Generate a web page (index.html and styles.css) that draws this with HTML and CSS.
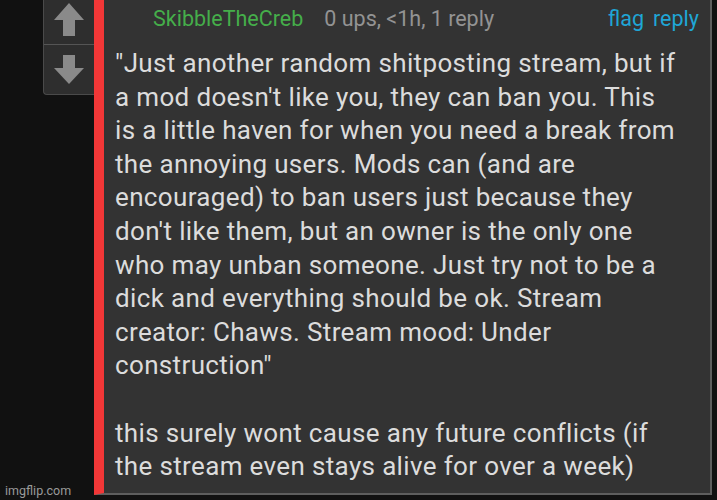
FILE: index.html
```html
<!doctype html>
<html>
<head>
	<meta charset='utf-8' />
	<title>comment</title>
	<link rel="stylesheet" href="styles.css">
</head>

<body>
	<div class='page'>
		<div class='vote'>
			<div class='vote-btn'>
				<svg width='30' height='33' viewBox='0 0 30 33'><path d='M15 0 L30 17 L21 17 L21 33 L9 33 L9 17 L0 17 Z' fill='#8a8a8a'/></svg>
			</div>
			<div class='vote-btn down'>
				<svg width='30' height='29' viewBox='0 0 30 29'><path d='M9 0 L21 0 L21 13 L30 13 L15 29 L0 13 L9 13 Z' fill='#8a8a8a'/></svg>
			</div>
		</div>
		<div class='comment'>
			<div class='head'>
				<span class='user'>SkibbleTheCreb</span>
				<span class='meta'>0 ups, &lt;1h, 1 reply</span>
				<span class='links'><a>flag</a><a>reply</a></span>
			</div>
			<div class='text'>
				<p>"Just another random shitposting stream, but if<br>
				a mod doesn't like you, they can ban you. This<br>
				is a little haven for when you need a break from<br>
				the annoying users. Mods can (and are<br>
				encouraged) to ban users just because they<br>
				don't like them, but an owner is the only one<br>
				who may unban someone. Just try not to be a<br>
				dick and everything should be ok. Stream<br>
				creator: Chaws. Stream mood: Under<br>
				construction"</p>
				<p>this surely wont cause any future conflicts (if<br>
				the stream even stays alive for over a week)</p>
			</div>
		</div>
	</div>
	<div class='mark'>imgflip.com</div>
</body>
</html>
```

FILE: styles.css
```css
/*reset*/
body,div,p{margin:0;padding:0;}
body{background:#111;font-family:Roboto,"Liberation Sans",sans-serif;height:500px;overflow:hidden;}

/*layout*/
.page{display:flex;align-items:flex-start;padding-left:43px;width:669px;}
.vote{width:50px;border:1px solid #4a4a4a;border-top:0;border-right:0;border-radius:0 0 0 4px;background:#2e2e2e;}
.vote-btn{height:44px;display:flex;justify-content:center;align-items:flex-start;padding-top:3px;box-sizing:border-box;}
.vote-btn.down{height:50px;border-top:1px solid #555;padding-top:10px;}

.comment{flex:1;background:#333;border-left:10px solid #f23737;border-right:2px solid #5e5e5e;border-bottom:2px solid #5e5e5e;height:495px;box-sizing:border-box;}
.head{display:flex;align-items:baseline;height:47px;padding:6px 11px 0 49px;box-sizing:border-box;font-size:21.5px;}
.user{color:#45ae4a;}
.meta{color:#939393;margin-left:21px;}
.links{margin-left:auto;}
.links a{color:#1fa6d6;margin-left:9px;}

.text{padding:0 8px 0 11px;color:#dcdcdc;font-size:26px;letter-spacing:0.35px;line-height:33.6px;white-space:nowrap;}
.text p{margin-bottom:33.6px;}

.mark{position:absolute;left:5px;top:483px;color:#9a9a9a;font-size:12.5px;}
```
